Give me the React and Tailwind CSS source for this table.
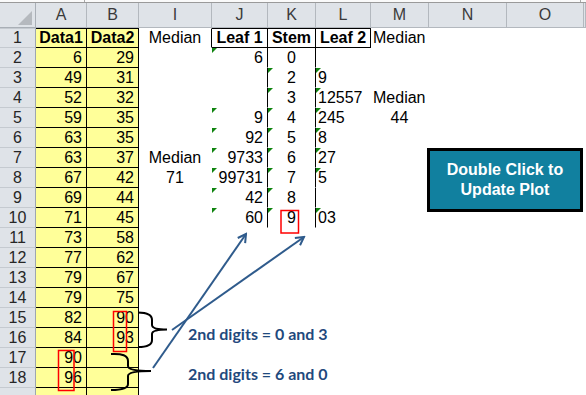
import React from "react";

const cols = ["A", "B", "I", "J", "K", "L", "M", "N", "O", ""];

// each row: [A, B, I, J, K, L, M]
const rows = [
  ["Data1", "Data2", "Median", "Leaf 1", "Stem", "Leaf 2", "Median"],
  ["6", "29", "", "6*", "0", "", ""],
  ["49", "31", "", "", "2*", "9*", ""],
  ["52", "32", "", "", "3*", "12557*", "Median"],
  ["59", "35", "", "9*", "4*", "245*", "44"],
  ["63", "35", "", "92*", "5*", "8*", ""],
  ["63", "37", "Median", "9733*", "6*", "27*", ""],
  ["67", "42", "71", "99731*", "7*", "5*", ""],
  ["69", "44", "", "42*", "8*", "", ""],
  ["71", "45", "", "60*", "9*", "03*", ""],
  ["73", "58"],
  ["77", "62"],
  ["79", "67"],
  ["79", "75"],
  ["82", "90"],
  ["84", "93"],
  ["90", ""],
  ["96", ""],
  ["", ""],
];

function Cell({ v = "", align = "right", bold, cls }) {
  const tri = v.endsWith("*");
  const text = tri ? v.slice(0, -1) : v;
  const al =
    align === "center" ? "justify-center" : align === "left" ? "justify-start pl-[2px]" : "justify-end pr-[4px]";
  return (
    <div className={`relative flex items-end overflow-visible whitespace-nowrap leading-[18px] ${al} ${bold ? "font-bold" : ""} ${cls}`}>
      {tri && (
        <span className="absolute left-0 top-0 w-[5px] h-[5px] bg-[#108410] [clip-path:polygon(0_0,100%_0,0_100%)]" />
      )}
      {text}
    </div>
  );
}

export default function App() {
  return (
    <div className="relative w-[586px] h-[395px] overflow-hidden bg-white text-[16px] text-black font-['Liberation_Sans',Arial,sans-serif]">
      {/* formula bar edge */}
      <div className="flex h-[3px] border-b border-[#9a9a9a] bg-[#fafafa]">
        <div className="w-[85px] border-r border-[#a8a8a8]" />
        <div className="w-[496px] border-r border-[#a8a8a8]" />
      </div>

      <div className="grid grid-cols-[36px_51px_52px_73px_56px_48px_55px_58px_78px_77px_1fr] grid-rows-[25px] auto-rows-[20px]">
        {/* column headers */}
        <div className="relative bg-[#dfe3e8] border-r border-b border-[#a9afb6]">
          <svg className="absolute left-0 top-0" width="35" height="24">
            <polygon points="18,22 32,8 32,22" fill="#b5b9be" />
          </svg>
        </div>
        {cols.map((c, i) => (
          <div
            key={i}
            className="flex items-center justify-center bg-[#dfe3e8] border-r border-b border-[#b3b8be] text-[#3a3a3a]"
          >
            {c}
          </div>
        ))}

        {rows.map((r, ri) => {
          const n = ri + 1;
          const first = n === 1;
          const stemRow = n <= 10;
          return (
            <React.Fragment key={n}>
              <div
                className={`flex items-center justify-center bg-[#dfe3e8] border-r border-b border-r-[#9ea6b0] border-b-[#c5cad0] text-[#262626] ${first ? "border-t border-t-[#c5cad0]" : ""}`}
              >
                {n < 19 ? n : ""}
              </div>
              <Cell
                v={r[0]}
                align={first ? "center" : "right"}
                bold={first}
                cls={`bg-[#ffff99] border-r border-b border-black ${first ? "border-t" : ""}`}
              />
              <Cell
                v={r[1]}
                align={first ? "center" : "right"}
                bold={first}
                cls={`bg-[#ffff99] border-r border-b border-black ${first ? "border-t" : ""}`}
              />
              <Cell
                v={r[2]}
                align="center"
                cls={`border-r border-b border-b-transparent ${first ? "border-t border-t-transparent border-r-black" : "border-r-transparent"}`}
              />
              <Cell
                v={r[3]}
                align={first ? "center" : "right"}
                bold={first}
                cls={`border-r border-b ${stemRow ? "border-r-black" : "border-r-transparent"} ${first ? "border-t border-t-black border-b-black" : "border-b-transparent"}`}
              />
              <Cell
                v={r[4]}
                align="center"
                bold={first}
                cls={`border-r border-b ${stemRow ? "border-r-black" : "border-r-transparent"} ${first ? "border-t border-t-black border-b-black" : "border-b-transparent"}`}
              />
              <Cell
                v={r[5]}
                align={first ? "center" : "left"}
                bold={first}
                cls={`border-r border-b ${first ? "border-t border-t-black border-b-black border-r-black" : "border-b-transparent border-r-transparent"}`}
              />
              <Cell
                v={r[6]}
                align={r[6] === "44" ? "center" : "left"}
                cls={`border-r border-b border-transparent ${first ? "border-t" : ""}`}
              />
              <div className={`border-r border-b border-transparent ${first ? "border-t" : ""}`} />
              <div className={`border-r border-b border-transparent ${first ? "border-t" : ""}`} />
              <div className={`border-r border-b border-transparent ${first ? "border-t" : ""}`} />
            </React.Fragment>
          );
        })}
      </div>

      {/* macro button */}
      <div className="absolute left-[427px] top-[148px] w-[156px] h-[64px] flex flex-col items-center justify-center border-[3px] border-black bg-[#11809f] text-white font-bold leading-[20px]">
        <span>Double Click to</span>
        <span>Update Plot</span>
      </div>

      {/* annotations */}
      <div className="absolute left-[188px] top-[322px] font-['Lato',sans-serif] font-bold text-[16px] text-[#1f497d] whitespace-nowrap">
        2nd digits = 0 and 3
      </div>
      <div className="absolute left-[188px] top-[362px] font-['Lato',sans-serif] font-bold text-[16px] text-[#1f497d] whitespace-nowrap">
        2nd digits = 6 and 0
      </div>

      <svg className="absolute left-0 top-0 pointer-events-none" width="586" height="395">
        <defs>
          <marker id="ah" markerWidth="12" markerHeight="12" refX="10" refY="6" orient="auto" markerUnits="userSpaceOnUse">
            <path d="M2,1.5 L10,6 L2,10.5" fill="none" stroke="#2f5b8c" strokeWidth="2" />
          </marker>
        </defs>
        <rect x="113.5" y="311.5" width="13" height="40" fill="none" stroke="#ff0000" strokeWidth="1.5" />
        <rect x="58.5" y="350.5" width="15.5" height="40" fill="none" stroke="#ff0000" strokeWidth="1.5" />
        <rect x="281" y="210.5" width="17.5" height="22.5" fill="none" stroke="#ff0000" strokeWidth="1.5" />
        <path
          d="M138,312.5 Q152,312.5 152,320 L152,325 Q152,329.5 167,329.5 Q152,329.5 152,334 L152,340 Q152,347 138,347"
          fill="none"
          stroke="#000"
          strokeWidth="2"
        />
        <path
          d="M111,354 Q128,353 128,361 L128,366 Q128,371 151,371 Q128,371 128,376 L128,384 Q128,390 111,390"
          fill="none"
          stroke="#000"
          strokeWidth="2"
        />
        <line x1="153" y1="368" x2="246" y2="234" stroke="#2f5b8c" strokeWidth="2" markerEnd="url(#ah)" />
        <line x1="172" y1="330" x2="304" y2="237" stroke="#2f5b8c" strokeWidth="2" markerEnd="url(#ah)" />
      </svg>
    </div>
  );
}
